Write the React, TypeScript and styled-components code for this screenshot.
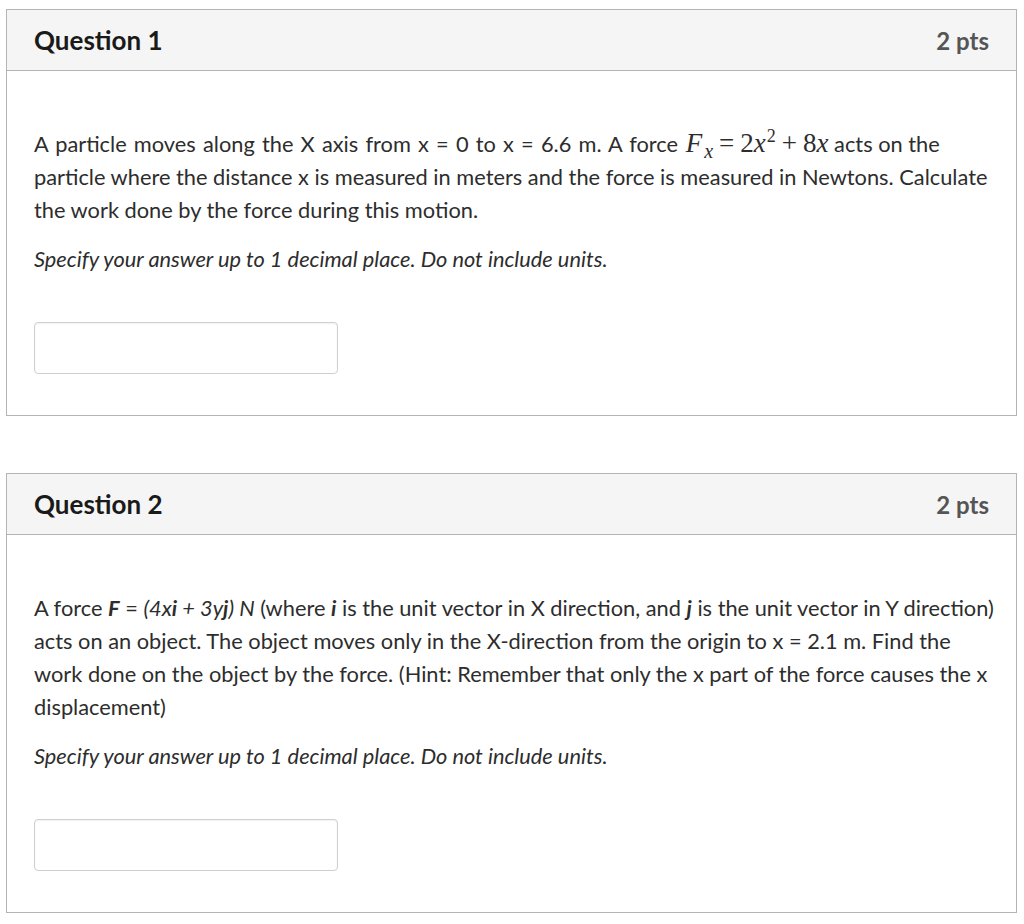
import styled, { createGlobalStyle } from 'styled-components';

const GlobalStyle = createGlobalStyle`
  body {
    margin: 0;
    background: #fff;
    font-family: Lato, "Open Sans", sans-serif;
    color: #2d2d2d;
  }
`;

const Page = styled.div`
  display: flex;
  flex-direction: column;
  gap: 57px;
  padding: 9px 7px 0 6px;
`;

const Card = styled.section`
  border: 1px solid #b4b4b4;
  background: #fff;
`;

const Header = styled.header`
  display: flex;
  align-items: center;
  justify-content: space-between;
  height: 60px;
  padding: 0 27px 0 27px;
  background: #f5f5f5;
  border-bottom: 1px solid #b4b4b4;
`;

const Title = styled.h2`
  margin: 0;
  font-size: 26px;
  font-weight: 700;
  color: #1a1a1a;
`;

const Points = styled.span`
  font-size: 24px;
  font-weight: 700;
  color: #555;
`;

const Body = styled.div`
  padding: 56px 16px 41px 27px;
`;

const Text = styled.p<{ $italic?: boolean }>`
  margin: 0 0 16px;
  font-size: 21.8px;
  line-height: 33px;
  font-style: ${(p) => (p.$italic ? 'italic' : 'normal')};
`;

const Lead = styled.span`
  word-spacing: 1.6px;
`;

const Answer = styled.input`
  display: block;
  box-sizing: border-box;
  width: 304px;
  height: 52px;
  margin-top: 47px;
  border: 1px solid #cfcfcf;
  border-radius: 4px;
  box-shadow: inset 0 1px 2px rgba(0, 0, 0, 0.06);
  outline: none;
`;

const Math = styled.span`
  font-family: "Liberation Serif", "DejaVu Serif", serif;
  font-size: 27px;
  white-space: nowrap;
  margin-left: 2px;
  i {
    font-style: italic;
  }
  sub {
    font-size: 20px;
    vertical-align: -6px;
    line-height: 0;
    margin-left: 2px;
  }
  sup {
    font-size: 18px;
    vertical-align: 10px;
    line-height: 0;
    margin-left: 1px;
  }
`;

const Op = styled.span`
  margin: 0 6px;
`;

export default function App() {
  return (
    <>
      <GlobalStyle />
      <Page>
        <Card>
          <Header>
            <Title>Question 1</Title>
            <Points>2 pts</Points>
          </Header>
          <Body>
            <Text>
              <Lead>A particle moves along the X axis from x = 0 to x = 6.6 m. A force</Lead>{' '}
              <Math>
                <i>F</i>
                <sub>
                  <i>x</i>
                </sub>
                <Op>=</Op>2<i>x</i>
                <sup>2</sup>
                <Op>+</Op>8<i>x</i>
              </Math>{' '}
              acts on the particle where the distance x is measured in meters and the force is measured in Newtons.
              Calculate the work done by the force during this motion.
            </Text>
            <Text $italic>Specify your answer up to 1 decimal place. Do not include units.</Text>
            <Answer type="text" />
          </Body>
        </Card>
        <Card>
          <Header>
            <Title>Question 2</Title>
            <Points>2 pts</Points>
          </Header>
          <Body>
            <Text>
              A force <b><i>F</i></b> = <i>(4x<b>i</b> + 3y<b>j</b>) N</i> (where <b><i>i</i></b> is the unit vector in X
              direction, and <b><i>j</i></b> is the unit vector in Y direction) acts on an object. The object moves only
              in the X-direction from the origin to x = 2.1 m. Find the work done on the object by the force. (Hint:
              Remember that only the x part of the force causes the x displacement)
            </Text>
            <Text $italic>Specify your answer up to 1 decimal place. Do not include units.</Text>
            <Answer type="text" />
          </Body>
        </Card>
      </Page>
    </>
  );
}
